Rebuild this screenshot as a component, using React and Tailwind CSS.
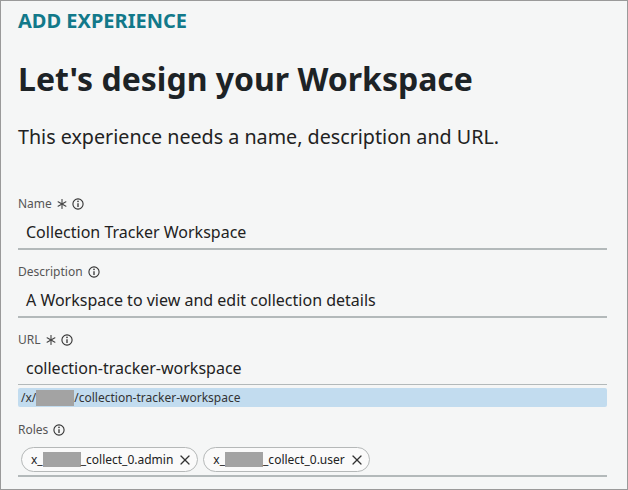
import React from "react";

const font = { fontFamily: '"Noto Sans", "Open Sans", sans-serif' };

const InfoIcon = () => (
  <svg width="12" height="12" viewBox="0 0 12 12" fill="none" className="inline-block">
    <circle cx="6" cy="6" r="5.1" stroke="#333" strokeWidth="1.1" />
    <line x1="6" y1="5.2" x2="6" y2="9" stroke="#333" strokeWidth="1.3" />
    <circle cx="6" cy="3.4" r="0.8" fill="#333" />
  </svg>
);

const Req = () => (
  <svg width="10" height="10" viewBox="0 0 10 10" className="inline-block">
    <g stroke="#444" strokeWidth="1.1" strokeLinecap="round">
      <line x1="5" y1="0.5" x2="5" y2="9.5" />
      <line x1="1.1" y1="2.75" x2="8.9" y2="7.25" />
      <line x1="1.1" y1="7.25" x2="8.9" y2="2.75" />
    </g>
  </svg>
);

const Close = () => (
  <svg width="10" height="10" viewBox="0 0 10 10" className="inline-block">
    <g stroke="#333" strokeWidth="1.2" strokeLinecap="round">
      <line x1="1" y1="1" x2="9" y2="9" />
      <line x1="9" y1="1" x2="1" y2="9" />
    </g>
  </svg>
);

const Label = ({ text, required }) => (
  <div className="flex items-center gap-[5px] h-[18px] text-[12px] leading-[18px] text-[#555]">
    <span>{text}</span>
    {required && <Req />}
    <InfoIcon />
  </div>
);

const Field = ({ label, value, required, line = "border-b-2" }) => (
  <div className="flex flex-col">
    <Label text={label} required={required} />
    <div className={`mt-[7px] pb-[4px] pl-[8px] text-[16px] leading-[24px] text-[#222] ${line} border-[#b3b9ba]`}>
      {value}
    </div>
  </div>
);

const Redact = ({ w, h }) => (
  <span className={`inline-block bg-[#a3a3a3] ${w} ${h}`} />
);

const Chip = ({ role }) => (
  <div className="flex items-center h-[25px] pl-[9px] pr-[7px] rounded-full border border-[#b5b8b8] bg-[#fafafa] text-[12px] text-[#222]">
    <span>x_</span>
    <Redact w="w-[38px]" h="h-[15px]" />
    <span>_collect_0.{role}</span>
    <span className="ml-[7px] flex items-center">
      <Close />
    </span>
  </div>
);

export default function App() {
  return (
    <div
      style={font}
      className="w-[628px] h-[490px] box-border border border-[#9a9a9a] bg-[#f5f6f6] pl-[17px] pr-[20px] pt-[6px] overflow-hidden"
    >
      <div className="text-[20px] leading-[28px] font-bold text-[#12798a]">ADD EXPERIENCE</div>
      <h1 className="mt-[22px] text-[32px] leading-[44px] font-bold text-[#1d2326]">
        Let's design your Workspace
      </h1>
      <p className="mt-[22px] text-[19.7px] leading-[28px] text-[#222]">
        This experience needs a name, description and URL.
      </p>

      <div className="mt-[44px] flex flex-col gap-[13px]">
        <Field label="Name" value="Collection Tracker Workspace" required />
        <Field label="Description" value="A Workspace to view and edit collection details" />
        <div className="flex flex-col">
          <Field label="URL" value="collection-tracker-workspace" required line="border-b" />
          <div className="mt-[3px] h-[19px] bg-[#c2dcef] rounded-[2px] flex items-center pl-[3px] text-[12px] text-[#333]">
            <span>/x/</span>
            <Redact w="w-[38px]" h="h-[16px]" />
            <span>/collection-tracker-workspace</span>
          </div>
        </div>
        <div className="flex flex-col mt-[1px]">
          <Label text="Roles" />
          <div className="mt-[8px] pb-[3px] pl-[3px] flex gap-[5px] border-b-2 border-[#b3b9ba]">
            <Chip role="admin" />
            <Chip role="user" />
          </div>
        </div>
      </div>
    </div>
  );
}
